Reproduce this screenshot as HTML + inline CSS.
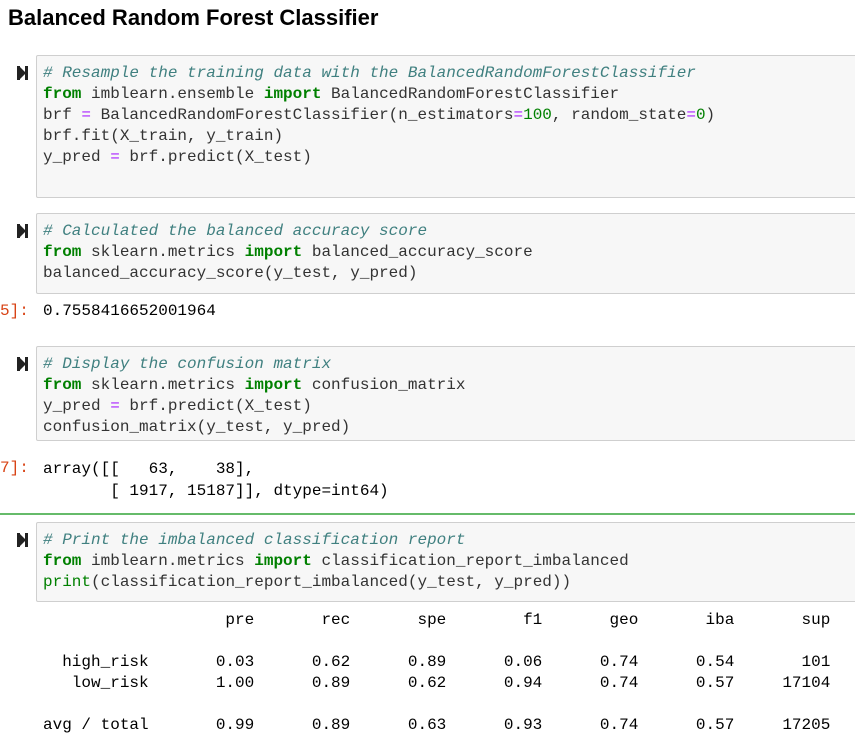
<!DOCTYPE html>
<html><head><style>
body{margin:0;width:855px;height:750px;background:#fff;position:relative;overflow:hidden;font-family:"Liberation Mono",monospace;}
h1{position:absolute;left:8px;top:5px;margin:0;font:bold 22px "Liberation Sans",sans-serif;color:#000}
.box{position:absolute;left:36px;width:830px;background:#f7f7f7;border:1px solid #cfcfcf;border-radius:2px;box-sizing:border-box}
pre{margin:0;font-family:"Liberation Mono",monospace;font-size:16px;line-height:21px;color:#333;position:absolute;left:43px;white-space:pre}
.c{color:#408080;font-style:italic}.k{color:#008000;font-weight:bold}.o{color:#AA22FF}.n{color:#008000}.b{color:#008000}
.run{position:absolute;left:17px;width:11px;height:14px}
.p{position:absolute;left:0;font-size:16px;line-height:21px;color:#D84315;font-family:"Liberation Mono",monospace}
.out{color:#000;font-size:16px}
</style></head><body>
<h1>Balanced Random Forest Classifier</h1>

<svg class="run" style="top:66px" viewBox="0 0 11 14"><path d="M0 0h3v14H0zM3 1l6 6-6 6z M8 0h3v14H8z" fill="#222"/></svg>
<div class="box" style="top:55px;height:143px"></div>
<pre style="top:63px"><span class="c"># Resample the training data with the BalancedRandomForestClassifier</span>
<span class="k">from</span> imblearn.ensemble <span class="k">import</span> BalancedRandomForestClassifier
brf <span class="o">=</span> BalancedRandomForestClassifier(n_estimators<span class="o">=</span><span class="n">100</span>, random_state<span class="o">=</span><span class="n">0</span>)
brf.fit(X_train, y_train)
y_pred <span class="o">=</span> brf.predict(X_test)</pre>

<svg class="run" style="top:224px" viewBox="0 0 11 14"><path d="M0 0h3v14H0zM3 1l6 6-6 6z M8 0h3v14H8z" fill="#222"/></svg>
<div class="box" style="top:213px;height:81px"></div>
<pre style="top:221px"><span class="c"># Calculated the balanced accuracy score</span>
<span class="k">from</span> sklearn.metrics <span class="k">import</span> balanced_accuracy_score
balanced_accuracy_score(y_test, y_pred)</pre>

<div class="p" style="top:301px">5]:</div>
<pre class="out" style="top:301px">0.7558416652001964</pre>

<svg class="run" style="top:357px" viewBox="0 0 11 14"><path d="M0 0h3v14H0zM3 1l6 6-6 6z M8 0h3v14H8z" fill="#222"/></svg>
<div class="box" style="top:346px;height:95px"></div>
<pre style="top:354px"><span class="c"># Display the confusion matrix</span>
<span class="k">from</span> sklearn.metrics <span class="k">import</span> confusion_matrix
y_pred <span class="o">=</span> brf.predict(X_test)
confusion_matrix(y_test, y_pred)</pre>

<div class="p" style="top:458px">7]:</div>
<pre class="out" style="top:458px;line-height:22px">array([[   63,    38],
       [ 1917, 15187]], dtype=int64)</pre>

<div style="position:absolute;left:0;top:513px;width:855px;height:2px;background:#66bb6a"></div>

<svg class="run" style="top:533px" viewBox="0 0 11 14"><path d="M0 0h3v14H0zM3 1l6 6-6 6z M8 0h3v14H8z" fill="#222"/></svg>
<div class="box" style="top:522px;height:80px"></div>
<pre style="top:530px"><span class="c"># Print the imbalanced classification report</span>
<span class="k">from</span> imblearn.metrics <span class="k">import</span> classification_report_imbalanced
<span class="b">print</span>(classification_report_imbalanced(y_test, y_pred))</pre>

<pre class="out" style="top:610px;line-height:21px">                   pre       rec       spe        f1       geo       iba       sup

  high_risk       0.03      0.62      0.89      0.06      0.74      0.54       101
   low_risk       1.00      0.89      0.62      0.94      0.74      0.57     17104

avg / total       0.99      0.89      0.63      0.93      0.74      0.57     17205</pre>
</body></html>
